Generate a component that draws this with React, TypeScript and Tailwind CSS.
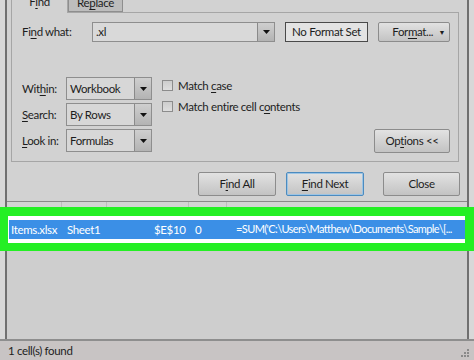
import React from "react";

const font = "font-['Lato',sans-serif] tracking-[-0.35px]";
const txt = "text-[11.5px] text-[#1d1d1d]";

function U({ children }: { children: React.ReactNode }) {
  return <span className="underline underline-offset-[2px] decoration-[1px]">{children}</span>;
}

function Arrow() {
  return (
    <svg width="7" height="4" viewBox="0 0 7 4">
      <path d="M0 0h7L3.5 4z" fill="#111" />
    </svg>
  );
}

function DropBtn() {
  return (
    <div className="w-[17px] h-full flex items-center justify-center border-l border-[#8a8a8a] bg-gradient-to-b from-[#cfcfcf] to-[#b3b3b3]">
      <Arrow />
    </div>
  );
}

function Select({ value }: { value: string }) {
  return (
    <div className="w-[86px] h-[23px] flex border border-[#8e8e8e] bg-[#d7d7d7]">
      <div className={`flex-1 pl-[3px] flex items-center ${txt}`}>{value}</div>
      <DropBtn />
    </div>
  );
}

function Btn({ children, w, focus }: { children: React.ReactNode; w: string; focus?: boolean }) {
  return (
    <div
      className={`${w} h-[24px] flex items-center justify-center rounded-[2px] border ${txt} bg-gradient-to-b from-[#e2e2e2] to-[#c3c3c3] ${
        focus ? "border-[#4c8bbf] shadow-[inset_0_0_0_1px_#9cc4e4]" : "border-[#8c8c8c]"
      }`}
    >
      {children}
    </div>
  );
}

function Check({ children }: { children: React.ReactNode }) {
  return (
    <div className="h-[11px] flex items-center gap-[5px]">
      <div className="w-[11px] h-[11px] border border-[#8c8c8c] bg-gradient-to-b from-[#cdcdcd] to-[#dedede]" />
      <span className={`${txt} leading-none`}>{children}</span>
    </div>
  );
}

export default function App() {
  return (
    <div className={`${font} w-[474px] h-[360px] overflow-hidden bg-[#d8d8d8] flex flex-col`}>
      {/* dialog */}
      <div className="h-[207px] flex">
        <div className="w-[5px]" />
        <div className="w-[464px] border-x-2 border-[#707070] bg-[#d2d2d2] flex flex-col">
          <div className="h-[12px] flex pl-[4px]">
            <div className="relative z-10 w-[57px] h-[13px] overflow-hidden border-x border-[#a6a6a6] bg-[#d2d2d2] flex justify-center">
              <div className={`mt-[-6px] leading-[16px] ${txt}`}>
                F<U>i</U>nd
              </div>
            </div>
            <div className="w-[55px] h-[12px] overflow-hidden border border-t-0 border-[#8e8e8e] bg-[#bdbdbd] flex justify-center">
              <div className={`mt-[-5px] leading-[16px] ${txt}`}>
                Re<U>p</U>lace
              </div>
            </div>
          </div>
          <div className="ml-[4px] w-[448px] h-[150px] border border-[#a6a6a6] pl-[10px] pr-[8px] pt-[9px] flex flex-col">
            <div className="h-[20px] flex items-center">
              <div className={`w-[70px] ${txt}`}>
                Fi<U>n</U>d what:
              </div>
              <div className="w-[183px] h-[20px] flex border border-[#8e8e8e] bg-[#d9d9d9]">
                <div className={`flex-1 pl-[3px] flex items-center ${txt}`}>.xl</div>
                <DropBtn />
              </div>
              <div className={`ml-[10px] w-[83px] h-[20px] flex items-center justify-center border border-[#4a4a4a] bg-[#e3e3e3] ${txt}`}>
                No Format Set
              </div>
              <div className={`ml-[10px] w-[72px] h-[20px] flex items-center rounded-[2px] border border-[#8c8c8c] bg-gradient-to-b from-[#e2e2e2] to-[#c3c3c3] ${txt}`}>
                <span className="flex-1 text-center pl-[8px]">
                  For<U>m</U>at...
                </span>
                <span className="pr-[4px] text-[7px]">▼</span>
              </div>
            </div>
            <div className="mt-[35px] flex">
              <div className="flex flex-col gap-[3px]">
                <div className="flex items-center">
                  <div className={`w-[44px] ${txt}`}>
                    Wit<U>h</U>in:
                  </div>
                  <Select value="Workbook" />
                </div>
                <div className="flex items-center">
                  <div className={`w-[44px] ${txt}`}>
                    <U>S</U>earch:
                  </div>
                  <Select value="By Rows" />
                </div>
                <div className="flex items-center">
                  <div className={`w-[44px] ${txt}`}>
                    <U>L</U>ook in:
                  </div>
                  <Select value="Formulas" />
                </div>
              </div>
              <div className="ml-[10px] pt-[3px] flex flex-col gap-[10px]">
                <Check>
                  Match <U>c</U>ase
                </Check>
                <Check>
                  Match entire cell c<U>o</U>ntents
                </Check>
              </div>
              <div className="ml-auto self-end mb-[-1px]">
                <Btn w="w-[76px]">
                  <span>
                    Op<U>t</U>ions &lt;&lt;
                  </span>
                </Btn>
              </div>
            </div>
          </div>
          <div className="mt-[10px] flex justify-end pr-[7px]">
            <Btn w="w-[78px]">
              <span>
                F<U>i</U>nd All
              </span>
            </Btn>
            <div className="ml-[10px]">
              <Btn w="w-[78px]" focus>
                <span>
                  <U>F</U>ind Next
                </span>
              </Btn>
            </div>
            <div className="ml-[19px]">
              <Btn w="w-[77px]">Close</Btn>
            </div>
          </div>
          <div className="mt-[5px] flex-1 border-t border-[#8a8a8a] bg-[#d4d4d4] flex">
            <div className="w-[55px] border-r border-[#bdbdbd]" />
            <div className="w-[45px] border-r border-[#bdbdbd]" />
            <div className="w-[82px] border-r border-[#bdbdbd]" />
            <div className="w-[38px] border-r border-[#bdbdbd]" />
          </div>
        </div>
      </div>

      {/* highlighted result */}
      <div className="h-[44px] bg-[#24ef24] pt-[9px] pl-[8px]">
        <div className="w-[457px] h-[27px] bg-white py-[4px] pl-[1px]">
          <div className="h-[19px] bg-[#3b8fe6] flex items-center text-[11.5px] text-white whitespace-nowrap">
            <span className="w-[58px] pl-[2px]">Items.xlsx</span>
            <span className="w-[87px]">Sheet1</span>
            <span className="w-[41px]">$E$10</span>
            <span className="w-[41px]">0</span>
            <span className="flex-1 overflow-hidden text-[11px] tracking-[-0.6px]">=SUM('C:\Users\Matthew\Documents\Sample\[...</span>
          </div>
        </div>
      </div>

      {/* list + status */}
      <div className="h-[88px] flex">
        <div className="w-[5px]" />
        <div className="w-[464px] border-x-2 border-[#707070] bg-[#cecece]" />
      </div>
      <div className={`relative flex-1 border-t-2 border-[#8e8e8e] bg-[#c8c4c4] flex items-center pl-[8px] ${txt}`}>
        1 cell(s) found
        <svg className="absolute right-[4px] bottom-[2px]" width="10" height="10" viewBox="0 0 10 10">
          <g fill="#8a8a8a">
            <rect x="7" y="1" width="2" height="2" />
            <rect x="4" y="4" width="2" height="2" />
            <rect x="7" y="4" width="2" height="2" />
            <rect x="1" y="7" width="2" height="2" />
            <rect x="4" y="7" width="2" height="2" />
            <rect x="7" y="7" width="2" height="2" />
          </g>
        </svg>
      </div>
    </div>
  );
}
